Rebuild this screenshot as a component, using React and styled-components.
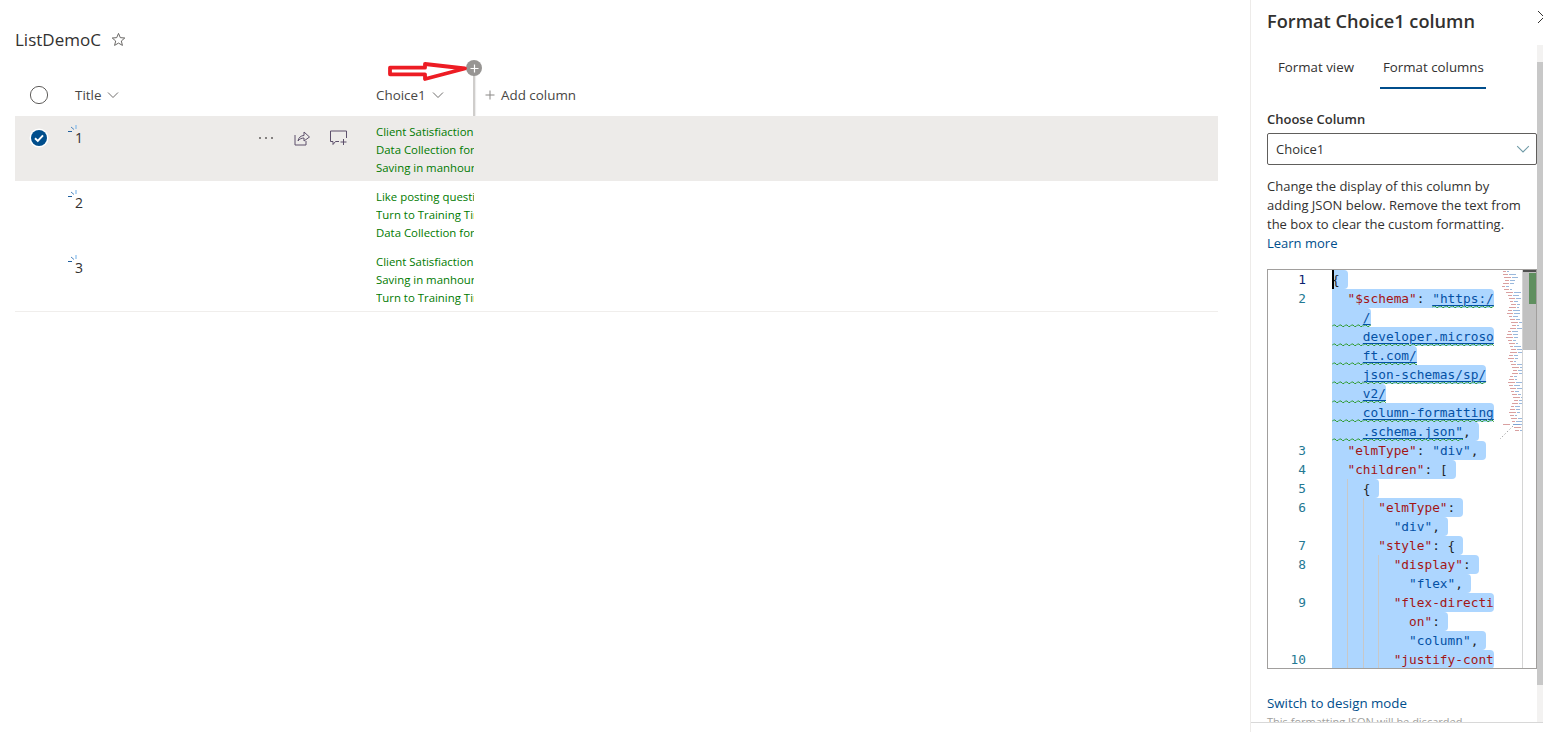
import React from "react";
import styled, { createGlobalStyle } from "styled-components";

const uiFont = `"Open Sans", "Noto Sans", sans-serif`;

const GlobalStyle = createGlobalStyle`
  html, body {
    margin: 0;
    padding: 0;
    background: #fff;
    font-family: ${uiFont};
    color: #323130;
  }
  * { box-sizing: border-box; }
`;

const rows = [
  { id: 1, selected: true, choices: ["Client Satisfiaction", "Data Collection for", "Saving in manhours"] },
  { id: 2, choices: ["Like posting questions", "Turn to Training Time", "Data Collection for"] },
  { id: 3, choices: ["Client Satisfiaction", "Saving in manhours", "Turn to Training Time"] },
];

// one entry per visual row of the editor, tight = wrapped row without the end of line padding
const codeRows = [
  { num: 1, parts: [["p", "{"]] },
  { num: 2, tight: true, parts: [["p", "  "], ["k", '"$schema"'], ["p", ": "], ["u", '"https:/']] },
  { tight: true, parts: [["i", "    "], ["u", "/"]] },
  { tight: true, parts: [["i", "    "], ["u", "developer.microso"]] },
  { tight: true, parts: [["i", "    "], ["u", "ft.com/"]] },
  { tight: true, parts: [["i", "    "], ["u", "json-schemas/sp/"]] },
  { tight: true, parts: [["i", "    "], ["u", "v2/"]] },
  { tight: true, parts: [["i", "    "], ["u", "column-formatting"]] },
  { parts: [["i", "    "], ["u", '.schema.json"'], ["p", ","]] },
  { num: 3, parts: [["p", "  "], ["k", '"elmType"'], ["p", ": "], ["s", '"div"'], ["p", ","]] },
  { num: 4, parts: [["p", "  "], ["k", '"children"'], ["p", ": ["]] },
  { num: 5, parts: [["p", "    {"]] },
  { num: 6, parts: [["p", "      "], ["k", '"elmType"'], ["p", ":"]] },
  { parts: [["p", "        "], ["s", '"div"'], ["p", ","]] },
  { num: 7, parts: [["p", "      "], ["k", '"style"'], ["p", ": {"]] },
  { num: 8, parts: [["p", "        "], ["k", '"display"'], ["p", ":"]] },
  { parts: [["p", "          "], ["s", '"flex"'], ["p", ","]] },
  { num: 9, tight: true, parts: [["p", "        "], ["k", '"flex-directi']] },
  { parts: [["p", "          "], ["k", 'on"'], ["p", ":"]] },
  { parts: [["p", "          "], ["s", '"column"'], ["p", ","]] },
  { num: 10, tight: true, parts: [["p", "        "], ["k", '"justify-cont']] },
];

const guides = [
  { left: 15, top: 209 },
  { left: 31, top: 228 },
  { left: 46, top: 285 },
];

const squiggle = `url("data:image/svg+xml,%3Csvg xmlns='http://www.w3.org/2000/svg' width='6' height='3'%3E%3Cpath d='M0 2.5 L1.5 1 L3 1 L4.5 2.5 L6 2.5' fill='none' stroke='%232d9a2d'/%3E%3C/svg%3E")`;

// indent of the minimap per row, roughly the shape of the document
const miniIndent = [3, 3, 4, 5, 3, 2, 4, 6, 8, 9, 10, 11, 9, 8, 7, 9, 10, 11, 12, 10, 8, 7, 6, 8, 9, 10, 11, 10, 9, 8, 10, 11, 12, 13, 12, 10, 9, 8, 9, 10, 11, 12, 13, 14, 12, 11, 10, 9, 10, 11, 12, 13, 14, 15];

const Minimap = () => {
  const marks = [];
  miniIndent.forEach((indent, i) => {
    const y = i * 3;
    const redWidth = 3 + ((i * 7) % 5);
    const blueWidth = 2 + ((i * 5) % 6);
    marks.push(<rect key={`r${i}`} x={indent} y={y} width={redWidth} height="1" fill="#d9a0a0" />);
    marks.push(<rect key={`b${i}`} x={indent + redWidth + 1} y={y} width={blueWidth} height="1" fill="#9ab8dc" />);
  });
  return (
    <MiniSvg width="22" height="168" viewBox="0 0 22 168">
      {marks}
      <rect x="3" y="153" width="7" height="1" fill="#d9a0a0" />
      <rect x="13" y="153" width="7" height="1" fill="#7ea3d4" />
      <path d="M13 155 L0 168" stroke="#a8a8a8" strokeWidth="1" strokeDasharray="1.5 2" fill="none" />
    </MiniSvg>
  );
};

const Chevron = ({ size = 12, color = "#605e5c" }) => (
  <svg width={size} height={size} viewBox="0 0 12 12" fill="none">
    <path d="M1 3.5 L6 8.5 L11 3.5" stroke={color} strokeWidth="0.9" />
  </svg>
);

const Spinner = () => (
  <SpinnerSvg width="10" height="8" viewBox="0 0 10 8" fill="none">
    <path d="M0 6.5 H4" stroke="#1f5f9e" strokeWidth="1" />
    <path d="M3 2 L6 4.5" stroke="#4f86bd" strokeWidth="1" />
    <path d="M8 0 V4" stroke="#6fb0ea" strokeWidth="1" />
  </SpinnerSvg>
);

const App = () => (
  <>
    <GlobalStyle />
    <Page>
      <Main>
        <ListTitle>
          <ListName>ListDemoC</ListName>
          <svg width="15" height="15" viewBox="0 0 16 16" fill="none">
            <path
              d="M8 1.5 L9.9 6 L14.7 6.4 L11 9.6 L12.2 14.3 L8 11.8 L3.8 14.3 L5 9.6 L1.3 6.4 L6.1 6 Z"
              stroke="#605e5c"
              strokeWidth="1"
              strokeLinejoin="round"
            />
          </svg>
        </ListTitle>

        <HeaderRow>
          <CheckCell>
            <svg width="20" height="20" viewBox="0 0 20 20" fill="none">
              <circle cx="10" cy="10" r="8.6" stroke="#605e5c" strokeWidth="1" />
            </svg>
          </CheckCell>
          <HeaderCell>
            Title <Chevron />
          </HeaderCell>
          <HeaderCell>
            Choice1 <Chevron />
          </HeaderCell>
          <AddColumn>
            <svg width="10" height="10" viewBox="0 0 10 10" fill="none">
              <path d="M5 0.5 V9.5 M0.5 5 H9.5" stroke="#8a8886" strokeWidth="1" />
            </svg>
            Add column
          </AddColumn>
          <InsertLine />
          <InsertDot>
            <svg width="9" height="9" viewBox="0 0 9 9" fill="none">
              <path d="M4.5 0.5 V8.5 M0.5 4.5 H8.5" stroke="#fff" strokeWidth="1.2" />
            </svg>
          </InsertDot>
          <RedArrow width="82" height="22" viewBox="0 0 82 22" fill="none">
            <path
              d="M3 7.7 H38 V4 L78 8.5 L38 19 V14.3 H3 Z"
              fill="#fff"
              stroke="#ed1c24"
              strokeWidth="3.8"
              strokeLinejoin="round"
            />
          </RedArrow>
        </HeaderRow>

        {rows.map((row) => (
          <ListRow key={row.id} $selected={row.selected}>
            <RowCheck>
              {row.selected && (
                <svg width="20" height="20" viewBox="0 0 20 20" fill="none">
                  <circle cx="10" cy="10" r="9.5" fill="#fff" />
                  <circle cx="10" cy="10" r="8" fill="#004e8c" />
                  <path d="M6 10.3 L8.8 13 L14 7.4" stroke="#fff" strokeWidth="1.9" />
                </svg>
              )}
            </RowCheck>
            <TitleCell>
              <RowNumber>
                <Spinner />
                {row.id}
              </RowNumber>
              {row.selected && (
                <RowActions>
                  <svg width="16" height="4" viewBox="0 0 16 4" fill="#605e5c">
                    <circle cx="2" cy="2" r="1" />
                    <circle cx="8" cy="2" r="1" />
                    <circle cx="14" cy="2" r="1" />
                  </svg>
                  <svg width="16" height="16" viewBox="0 0 16 16" fill="none" stroke="#5c4f6b" strokeWidth="1">
                    <path d="M1 5 V15 H12 V11" />
                    <path d="M4 11 C4.5 7.5 7 5.5 10 5.5 V2 L15.5 7 L10 11 V8 C7.5 8 5.5 9 4 11 Z" />
                  </svg>
                  <svg width="18" height="16" viewBox="0 0 18 16" fill="none" stroke="#5c4f6b" strokeWidth="1">
                    <path d="M9 11.5 H5.5 L3 14.5 V11.5 H0.5 V1 H16.5 V8" />
                    <path d="M10.5 12 H16.5 M13.5 9 V15" />
                  </svg>
                </RowActions>
              )}
            </TitleCell>
            <ChoiceCell>
              {row.choices.map((choice) => (
                <Choice key={choice}>{choice}</Choice>
              ))}
            </ChoiceCell>
          </ListRow>
        ))}
      </Main>

      <Panel>
        <PanelHeader>
          <PanelTitle>Format Choice1 column</PanelTitle>
          <CloseIcon width="10" height="14" viewBox="0 0 10 14" fill="none">
            <path d="M1 1 L7 7 L1 13" stroke="#323130" strokeWidth="1" />
          </CloseIcon>
        </PanelHeader>
        <PanelMiddle>
          <PanelBody>
            <Tabs>
              <Tab>Format view</Tab>
              <Tab $active>Format columns</Tab>
            </Tabs>
            <FieldLabel>Choose Column</FieldLabel>
            <Dropdown>
              Choice1
              <Chevron size={14} color="#6f9aa6" />
            </Dropdown>
            <HelpText>
              Change the display of this column by
              <br />
              adding JSON below. Remove the text from
              <br />
              the box to clear the custom formatting.
              <br />
              <PanelLink>Learn more</PanelLink>
            </HelpText>
            <Editor>
              <Gutter>
                {codeRows.map((row, i) => (
                  <LineNumber key={i} $first={row.num === 1}>
                    {row.num || "\u00a0"}
                  </LineNumber>
                ))}
              </Gutter>
              <Code>
                {codeRows.map((row, i) => (
                  <CodeRow key={i}>
                    <Selection $tight={row.tight}>
                      {row.parts.map(([kind, text], j) => (
                        <Token key={j} $kind={kind}>
                          {text}
                        </Token>
                      ))}
                    </Selection>
                  </CodeRow>
                ))}
                <Cursor />
                {guides.map((guide) => (
                  <IndentGuide key={guide.left} $left={guide.left} $top={guide.top} />
                ))}
              </Code>
              <Overview>
                <Minimap />
                <OverviewBar>
                  <ScrollMark />
                </OverviewBar>
              </Overview>
            </Editor>
            <DesignLink>Switch to design mode</DesignLink>
            <Faded>This formatting JSON will be discarded</Faded>
          </PanelBody>
          <PanelScroll>
            <PanelThumb />
          </PanelScroll>
        </PanelMiddle>
        <PanelFooter />
      </Panel>
    </Page>
  </>
);

const Page = styled.div`
  display: flex;
  width: 1543px;
  height: 732px;
  overflow: hidden;
`;

const Main = styled.main`
  width: 1250px;
  flex: none;
  padding: 28px 32px 0 15px;
`;

const ListTitle = styled.div`
  display: flex;
  align-items: center;
  gap: 10px;
  height: 22px;
  margin-bottom: 27px;
`;

const ListName = styled.h1`
  margin: 0;
  font-size: 17px;
  font-weight: 500;
  color: #323130;
`;

const listColumns = `60px 301px 98px 1fr`;

const HeaderRow = styled.div`
  position: relative;
  display: grid;
  grid-template-columns: ${listColumns};
  align-items: center;
  height: 39px;
  padding-bottom: 3px;
`;

const CheckCell = styled.div`
  display: flex;
  padding-left: 14px;
`;

const HeaderCell = styled.div`
  display: flex;
  align-items: center;
  gap: 6px;
  font-size: 13.4px;
  font-weight: 500;
  color: #484644;
`;

const AddColumn = styled(HeaderCell)`
  padding-left: 11px;
`;

const InsertLine = styled.div`
  position: absolute;
  left: 458px;
  top: -4px;
  bottom: 0;
  width: 2px;
  background: #cfcdcb;
  box-shadow: 1px 0 1px #ebebeb;
`;

const InsertDot = styled.div`
  position: absolute;
  left: 451px;
  top: -17px;
  width: 16px;
  height: 16px;
  border-radius: 50%;
  background: #979593;
  display: flex;
  align-items: center;
  justify-content: center;
`;

const RedArrow = styled.svg`
  position: absolute;
  left: 372px;
  top: -17px;
`;

const ListRow = styled.div`
  display: grid;
  grid-template-columns: ${listColumns};
  height: 65px;
  padding-top: 7px;
  background: ${({ $selected }) => ($selected ? "#edebe9" : "#fff")};
  box-shadow: ${({ $selected }) => ($selected ? "none" : "0 1px 0 #f0eeec")};
`;

const RowCheck = styled.div`
  padding: 5px 0 0 14px;
`;

const TitleCell = styled.div`
  display: flex;
  align-items: flex-start;
  justify-content: space-between;
  padding-right: 28px;
`;

const RowNumber = styled.div`
  position: relative;
  margin-top: 5px;
  font-size: 14px;
  line-height: 20px;
  color: #323130;
`;

const SpinnerSvg = styled.svg`
  position: absolute;
  left: -7px;
  top: -3px;
`;

const RowActions = styled.div`
  display: flex;
  align-items: center;
  gap: 20px;
  height: 30px;
`;

const ChoiceCell = styled.div`
  display: flex;
  flex-direction: column;
  overflow: hidden;
`;

const Choice = styled.div`
  height: 18px;
  font-size: 11.4px;
  line-height: 18px;
  white-space: nowrap;
  color: #007a00;
`;

const Panel = styled.aside`
  position: relative;
  flex: 1;
  display: flex;
  flex-direction: column;
  height: 732px;
  min-width: 0;
  border-left: 1px solid #edebe9;
`;

const PanelHeader = styled.div`
  display: flex;
  align-items: center;
  justify-content: space-between;
  height: 45px;
  padding: 0 0 4px 16px;
  overflow: hidden;
`;

const PanelTitle = styled.h2`
  margin: 0;
  font-size: 18.2px;
  font-weight: 600;
  color: #323130;
  white-space: nowrap;
`;

const CloseIcon = styled.svg`
  flex: none;
  margin: -8px -4px 0 0;
`;

const PanelMiddle = styled.div`
  flex: 1;
  display: flex;
  min-height: 0;
`;

const PanelBody = styled.div`
  flex: 1;
  min-width: 0;
  padding-left: 16px;
  overflow: hidden;
`;

const Tabs = styled.div`
  display: flex;
  gap: 29px;
  height: 44px;
  padding-left: 11px;
`;

const Tab = styled.div`
  position: relative;
  height: 44px;
  padding-top: 12px;
  font-size: 13.3px;
  line-height: 20px;
  font-weight: ${({ $active }) => ($active ? 500 : 400)};
  color: #323130;
  &::after {
    content: "";
    display: ${({ $active }) => ($active ? "block" : "none")};
    position: absolute;
    left: -3px;
    right: -2px;
    bottom: 0;
    height: 2px;
    background: #004e8c;
  }
`;

const FieldLabel = styled.div`
  margin-top: 20px;
  font-size: 13px;
  line-height: 20px;
  font-weight: 600;
  color: #323130;
`;

const Dropdown = styled.div`
  display: flex;
  align-items: center;
  justify-content: space-between;
  width: 270px;
  height: 32px;
  margin-top: 4px;
  padding: 0 6px 0 8px;
  border: 1px solid #605e5c;
  border-radius: 2px;
  font-size: 13px;
  color: #323130;
`;

const HelpText = styled.p`
  width: 270px;
  margin: 12px 0 0;
  font-size: 13px;
  line-height: 19px;
  white-space: nowrap;
  color: #323130;
`;

const PanelLink = styled.span`
  color: #004e8c;
`;

const Editor = styled.div`
  display: flex;
  width: 270px;
  height: 400px;
  margin-top: 16px;
  border: 1px solid #a19f9d;
  overflow: hidden;
  font-family: "DejaVu Sans Mono", "Liberation Mono", monospace;
  font-size: 12.8px;
  line-height: 19px;
`;

const Gutter = styled.div`
  flex: none;
  width: 64px;
  padding: 0 26px 0 0;
  text-align: right;
`;

const LineNumber = styled.div`
  height: 19px;
  color: ${({ $first }) => ($first ? "#0b216f" : "#237893")};
`;

const Code = styled.div`
  position: relative;
  flex: none;
  width: 162px;
  overflow: hidden;
`;

const CodeRow = styled.div`
  height: 19px;
  white-space: pre;
`;

const Selection = styled.span`
  display: inline-block;
  height: 19px;
  padding-right: ${({ $tight }) => ($tight ? "0" : "8px")};
  background: #add6ff;
  border-radius: 0 4px 4px 0;
`;

const tokenColors = { p: "#1f1f1f", k: "#a31515", s: "#0451a5", u: "#0451a5", i: "#0451a5" };

const Token = styled.span`
  display: inline-block;
  height: 19px;
  color: ${({ $kind }) => tokenColors[$kind]};
  ${({ $kind }) => $kind === "u" && "text-decoration: underline #0451a5 1px; text-underline-offset: 2px;"}
  ${({ $kind }) =>
    ($kind === "u" || $kind === "i") && `background: ${squiggle} repeat-x left bottom;`}
`;

const Cursor = styled.div`
  position: absolute;
  left: 0;
  top: 0;
  width: 2px;
  height: 19px;
  background: #000;
`;

const IndentGuide = styled.div`
  position: absolute;
  left: ${({ $left }) => $left}px;
  top: ${({ $top }) => $top}px;
  bottom: 0;
  width: 1px;
  background: #c8c8c8;
`;

const Overview = styled.div`
  flex: 1;
  display: flex;
  min-width: 0;
  padding-left: 6px;
`;

const MiniSvg = styled.svg`
  flex: none;
  margin-top: 1px;
`;

const OverviewBar = styled.div`
  flex: 1;
  height: 100%;
  border-left: 1px solid #d4d4d4;
  background: linear-gradient(#505050 2px, #c1c1c1 2px, #c1c1c1 80px, #fff 80px);
  display: flex;
  justify-content: flex-end;
  padding-top: 3px;
`;

const ScrollMark = styled.div`
  width: 7px;
  height: 31px;
  background: #5f8f5f;
`;

const DesignLink = styled.div`
  margin-top: 24px;
  font-size: 13.3px;
  line-height: 20px;
  color: #004e8c;
`;

const Faded = styled.div`
  margin-top: 1px;
  font-size: 11px;
  line-height: 16px;
  color: #a19f9d;
  white-space: nowrap;
`;

const PanelScroll = styled.div`
  flex: none;
  width: 6px;
  height: 100%;
  padding-top: 17px;
  background: #f3f2f1;
`;

const PanelThumb = styled.div`
  height: 623px;
  background: #c8c8c8;
`;

const PanelFooter = styled.div`
  flex: none;
  height: 10px;
  border-top: 1px solid #d8d8d8;
  background: #fff;
`;

export default App;
